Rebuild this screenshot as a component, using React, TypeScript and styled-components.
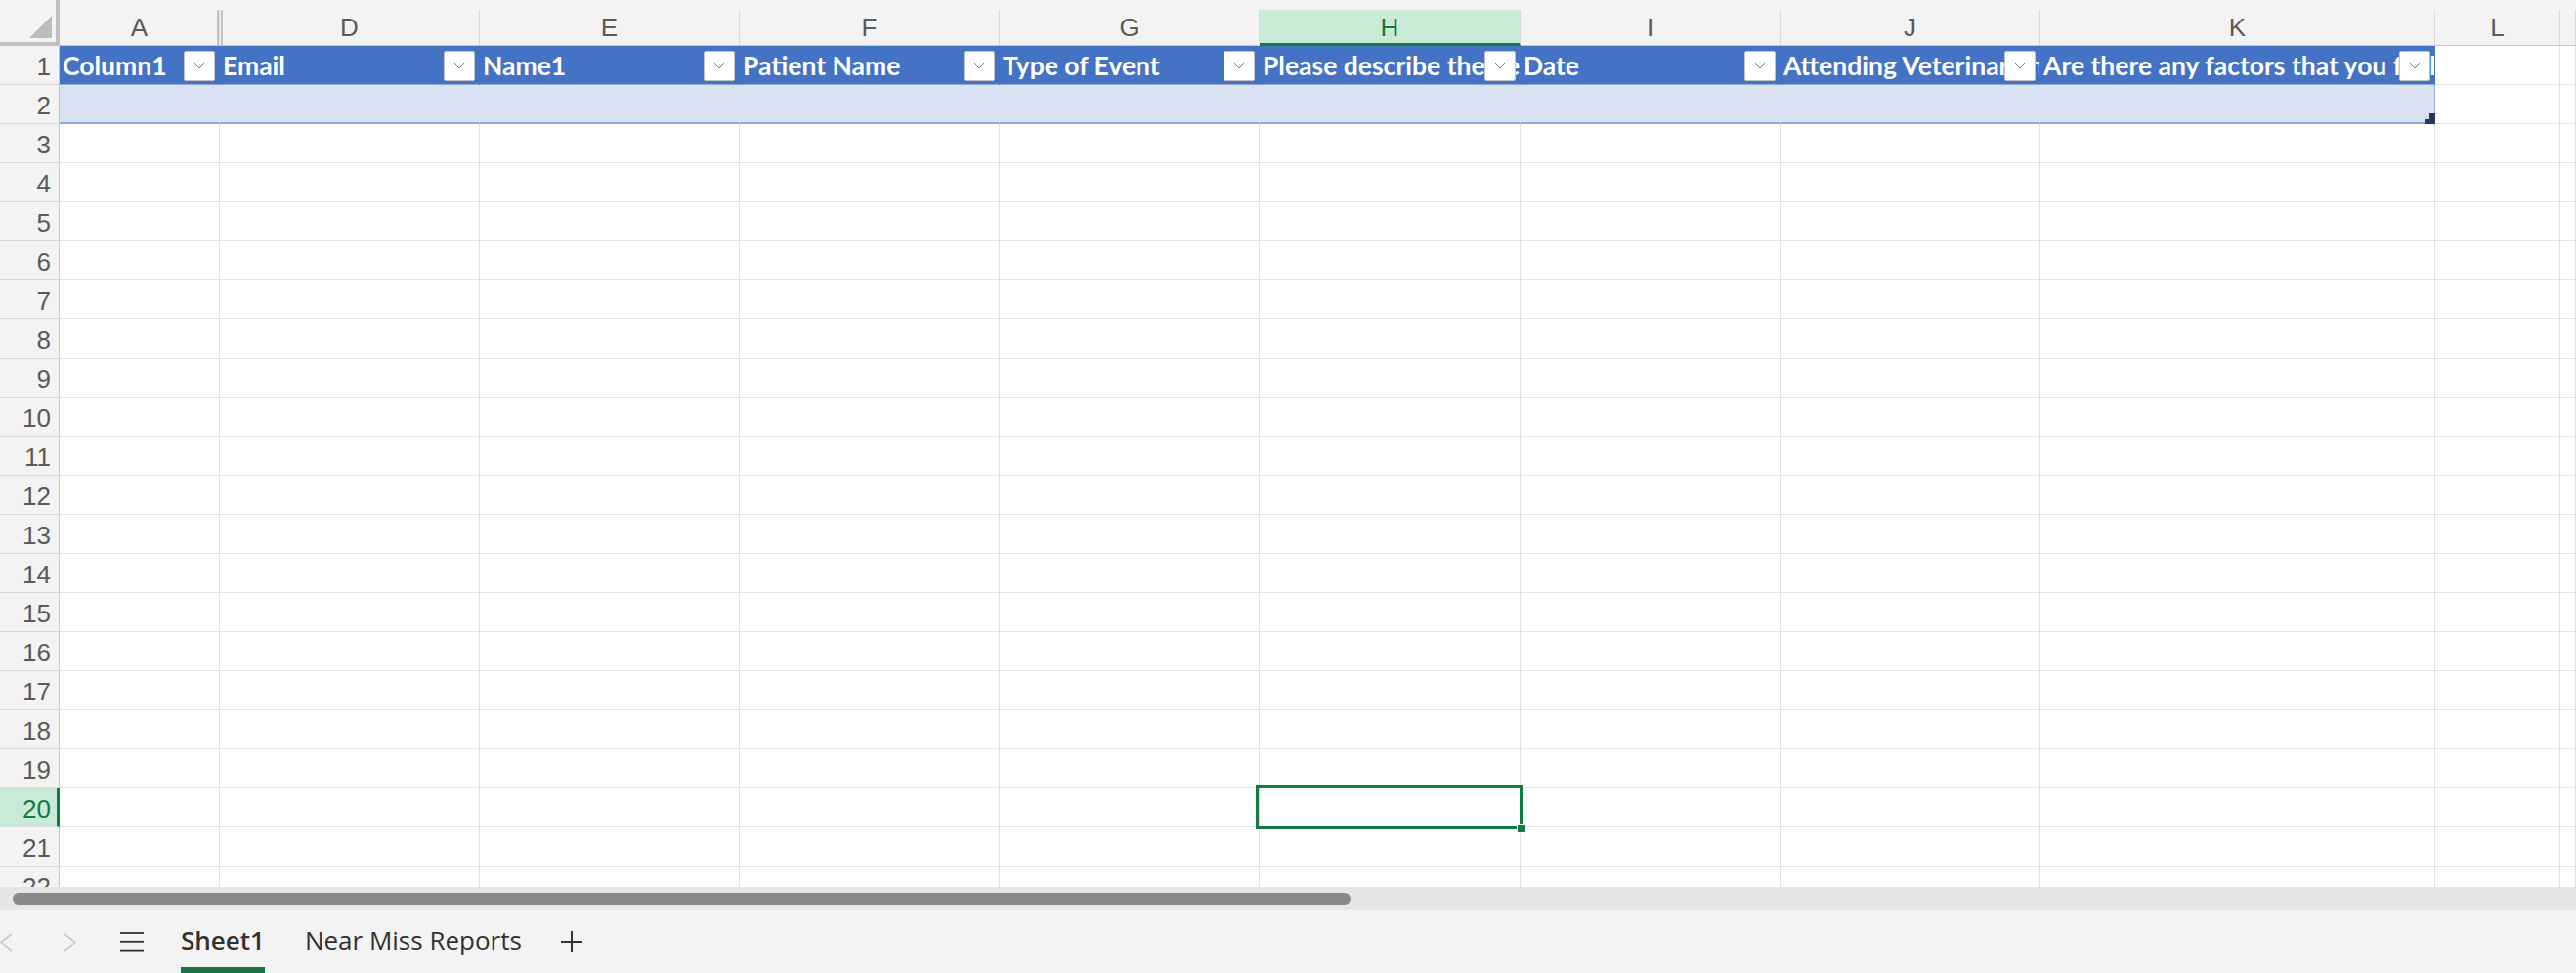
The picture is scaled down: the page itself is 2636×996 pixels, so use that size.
import React from 'react';
import styled, { createGlobalStyle, css } from 'styled-components';

const GlobalStyle = createGlobalStyle`
  html, body { margin: 0; padding: 0; background: #ffffff; }
  body { font-family: "Liberation Sans", Arial, sans-serif; overflow: hidden; }
  *, *::before, *::after { box-sizing: border-box; }
`;

type Column = { letter: string; title?: string; hiddenAfter?: boolean; selected?: boolean };

const columns: Column[] = [
  { letter: 'A', title: 'Column1', hiddenAfter: true },
  { letter: 'D', title: 'Email' },
  { letter: 'E', title: 'Name1' },
  { letter: 'F', title: 'Patient Name' },
  { letter: 'G', title: 'Type of Event' },
  { letter: 'H', title: 'Please describe the near miss event', selected: true },
  { letter: 'I', title: 'Date' },
  { letter: 'J', title: 'Attending Veterinarian' },
  { letter: 'K', title: 'Are there any factors that you feel contributed to the event?' },
  { letter: 'L' },
  { letter: '' },
];

const ROW_COUNT = 22;
const ACTIVE_ROW = 20;
const GRID = '#e1e1e1';
const GREEN = '#107c41';

const Page = styled.div`
  width: 2636px;
  height: 996px;
  display: flex;
  flex-direction: column;
  overflow: hidden;
  background: #ffffff;
`;

const Sheet = styled.div`
  height: 908px;
  flex-shrink: 0;
  overflow: hidden;
  display: grid;
  grid-template-columns: 61px 164px 266px 266px 266px 266px 267px 266px 266px 404px 128px 1fr;
  grid-template-rows: 47px;
  grid-auto-rows: 40px;
`;

const Corner = styled.div`
  background: #f3f3f3;
  border-right: 4px solid #bfbfbf;
  border-bottom: 4px solid #bfbfbf;
  display: flex;
  align-items: flex-end;
  justify-content: flex-end;
  padding: 0 4px 4px 0;
`;

const SelectAllMark = styled.span`
  width: 23px;
  height: 23px;
  background: #bcbcbc;
  clip-path: polygon(100% 0, 100% 100%, 0 100%);
`;

const ColHeader = styled.div<{ $hiddenAfter?: boolean }>`
  position: relative;
  display: flex;
  padding-top: 10px;
  background: #f3f3f3;
  ${(p) =>
    p.$hiddenAfter &&
    css`
      &::after {
        content: '';
        position: absolute;
        top: 10px;
        bottom: 0;
        right: -3px;
        width: 6px;
        border-left: 2px solid #c2c2c2;
        border-right: 2px solid #c2c2c2;
        z-index: 1;
      }
    `}
`;

const ColLabel = styled.div<{ $active?: boolean }>`
  flex: 1;
  display: flex;
  align-items: center;
  justify-content: center;
  border-right: 1px solid #dadada;
  border-bottom: 1px solid #c8c8c8;
  font-size: 26px;
  line-height: 29px;
  color: #5a5a5a;
  ${(p) =>
    p.$active &&
    css`
      background: #caead8;
      color: ${GREEN};
      border-bottom: 3px solid ${GREEN};
      padding-top: 2px;
    `}
`;

const RowHeader = styled.div<{ $active?: boolean }>`
  background: #f3f3f3;
  border-right: 1px solid #c6c6c6;
  border-bottom: 1px solid #dcdcdc;
  font-size: 26px;
  line-height: 34px;
  padding: 4px 8px 0 0;
  text-align: right;
  color: #5a5a5a;
  ${(p) =>
    p.$active &&
    css`
      background: #caead8;
      color: ${GREEN};
      border-right: 3px solid ${GREEN};
      padding-right: 6px;
    `}
`;

const Cell = styled.div<{ $tone?: 'head' | 'band'; $edge?: boolean }>`
  position: relative;
  min-width: 0;
  border-right: 1px solid ${GRID};
  border-bottom: 1px solid ${GRID};
  ${(p) =>
    p.$tone === 'head' &&
    css`
      overflow: hidden;
      background: #4472c4;
      border-right-color: #4472c4;
      border-bottom-color: #8eaadb;
      color: #ffffff;
      font-family: Lato, "Liberation Sans", sans-serif;
      font-weight: 700;
      font-size: 26.5px;
      line-height: 38px;
      white-space: nowrap;
      padding: 1px 0 0 3px;
    `}
  ${(p) =>
    p.$tone === 'band' &&
    css`
      background: #d9e1f2;
      border-right-color: ${p.$edge ? '#8eaadb' : '#d9e1f2'};
      border-bottom: 2px solid #8eaadb;
    `}
`;

const FilterButton = styled.span`
  position: absolute;
  top: 5px;
  right: 4px;
  width: 32px;
  height: 31px;
  background: #ffffff;
  border: 1px solid #c4c4c4;
  border-radius: 2px;
  display: flex;
  align-items: center;
  justify-content: center;
`;

const Selection = styled.span`
  position: absolute;
  top: -3px;
  left: -4px;
  right: -3px;
  bottom: -3px;
  border: 3px solid ${GREEN};
  z-index: 2;
  pointer-events: none;
`;

const FillHandle = styled.span`
  position: absolute;
  right: -7px;
  bottom: -7px;
  width: 10px;
  height: 10px;
  background: ${GREEN};
  border: 1px solid #ffffff;
`;

const ResizeHandle = styled.span`
  position: absolute;
  right: -1px;
  bottom: -2px;
  width: 11px;
  height: 11px;
  background: #1f3864;
  clip-path: polygon(45% 0, 100% 0, 100% 100%, 0 100%, 0 55%, 45% 55%);
`;

const HScroll = styled.div`
  height: 24px;
  flex-shrink: 0;
  background: #e6e6e6;
  padding: 6px 0 0 13px;
`;

const Thumb = styled.div`
  width: 1369px;
  height: 12px;
  border-radius: 6px;
  background: #8a8a8a;
`;

const TabBar = styled.div`
  height: 64px;
  flex-shrink: 0;
  background: #f3f3f3;
  display: flex;
  align-items: stretch;
  font-family: "Open Sans", "Noto Sans", sans-serif;
  color: #323130;
`;

const NavGroup = styled.div`
  display: flex;
  align-items: center;
  gap: 52px;
`;

const IconSlot = styled.div<{ $gapBefore: number }>`
  display: flex;
  align-items: center;
  margin-left: ${(p) => p.$gapBefore}px;
`;

const Tabs = styled.div`
  display: flex;
  gap: 41px;
  margin-left: 38px;
`;

const Tab = styled.div<{ $active?: boolean }>`
  display: flex;
  align-items: center;
  font-size: 26px;
  font-weight: ${(p) => (p.$active ? 600 : 400)};
  white-space: nowrap;
  border-bottom: 6px solid ${(p) => (p.$active ? '#1e7145' : 'transparent')};
  padding-top: 1px;
`;

const Chevron = ({ dir }: { dir: 'left' | 'right' }) => (
  <svg width="13" height="19" viewBox="0 0 13 19" fill="none">
    <polyline
      points={dir === 'left' ? '12,0.8 1.2,9.5 12,18.2' : '1,0.8 11.8,9.5 1,18.2'}
      stroke="#c4c4c4"
      strokeWidth="1.6"
    />
  </svg>
);

const MenuIcon = () => (
  <svg width="24" height="20" viewBox="0 0 24 20" fill="none">
    <line x1="0" y1="1" x2="24" y2="1" stroke="#333" strokeWidth="1.8" />
    <line x1="0" y1="9.8" x2="24" y2="9.8" stroke="#333" strokeWidth="1.8" />
    <line x1="0" y1="18.6" x2="24" y2="18.6" stroke="#333" strokeWidth="1.8" />
  </svg>
);

const PlusIcon = () => (
  <svg width="22" height="22" viewBox="0 0 22 22" fill="none">
    <line x1="11" y1="0" x2="11" y2="22" stroke="#333" strokeWidth="2" />
    <line x1="0" y1="11" x2="22" y2="11" stroke="#333" strokeWidth="2" />
  </svg>
);

const DropChevron = () => (
  <svg width="12" height="7" viewBox="0 0 12 7" fill="none">
    <polyline points="0.5,0.5 6,6 11.5,0.5" stroke="#7a7a7a" strokeWidth="1" />
  </svg>
);

function renderCell(row: number, col: Column, idx: number) {
  const inTable = !!col.title;
  const key = `${row}-${idx}`;
  if (inTable && row === 1) {
    return (
      <Cell key={key} $tone="head">
        {col.title}
        <FilterButton>
          <DropChevron />
        </FilterButton>
      </Cell>
    );
  }
  if (inTable && row === 2) {
    const edge = col.letter === 'K';
    return (
      <Cell key={key} $tone="band" $edge={edge}>
        {edge && <ResizeHandle />}
      </Cell>
    );
  }
  const selected = !!col.selected && row === ACTIVE_ROW;
  return (
    <Cell key={key}>
      {selected && (
        <Selection>
          <FillHandle />
        </Selection>
      )}
    </Cell>
  );
}

export default function App() {
  const rows = Array.from({ length: ROW_COUNT }, (_, i) => i + 1);
  return (
    <>
      <GlobalStyle />
      <Page>
        <Sheet>
          <Corner>
            <SelectAllMark />
          </Corner>
          {columns.map((c, i) => (
            <ColHeader key={`h-${i}`} $hiddenAfter={c.hiddenAfter}>
              <ColLabel $active={c.selected}>{c.letter}</ColLabel>
            </ColHeader>
          ))}
          {rows.map((r) => (
            <React.Fragment key={r}>
              <RowHeader $active={r === ACTIVE_ROW}>{r}</RowHeader>
              {columns.map((c, i) => renderCell(r, c, i))}
            </React.Fragment>
          ))}
        </Sheet>
        <HScroll>
          <Thumb />
        </HScroll>
        <TabBar>
          <NavGroup>
            <Chevron dir="left" />
            <Chevron dir="right" />
          </NavGroup>
          <IconSlot $gapBefore={45}>
            <MenuIcon />
          </IconSlot>
          <Tabs>
            <Tab $active>Sheet1</Tab>
            <Tab>Near Miss Reports</Tab>
          </Tabs>
          <IconSlot $gapBefore={40}>
            <PlusIcon />
          </IconSlot>
        </TabBar>
      </Page>
    </>
  );
}
